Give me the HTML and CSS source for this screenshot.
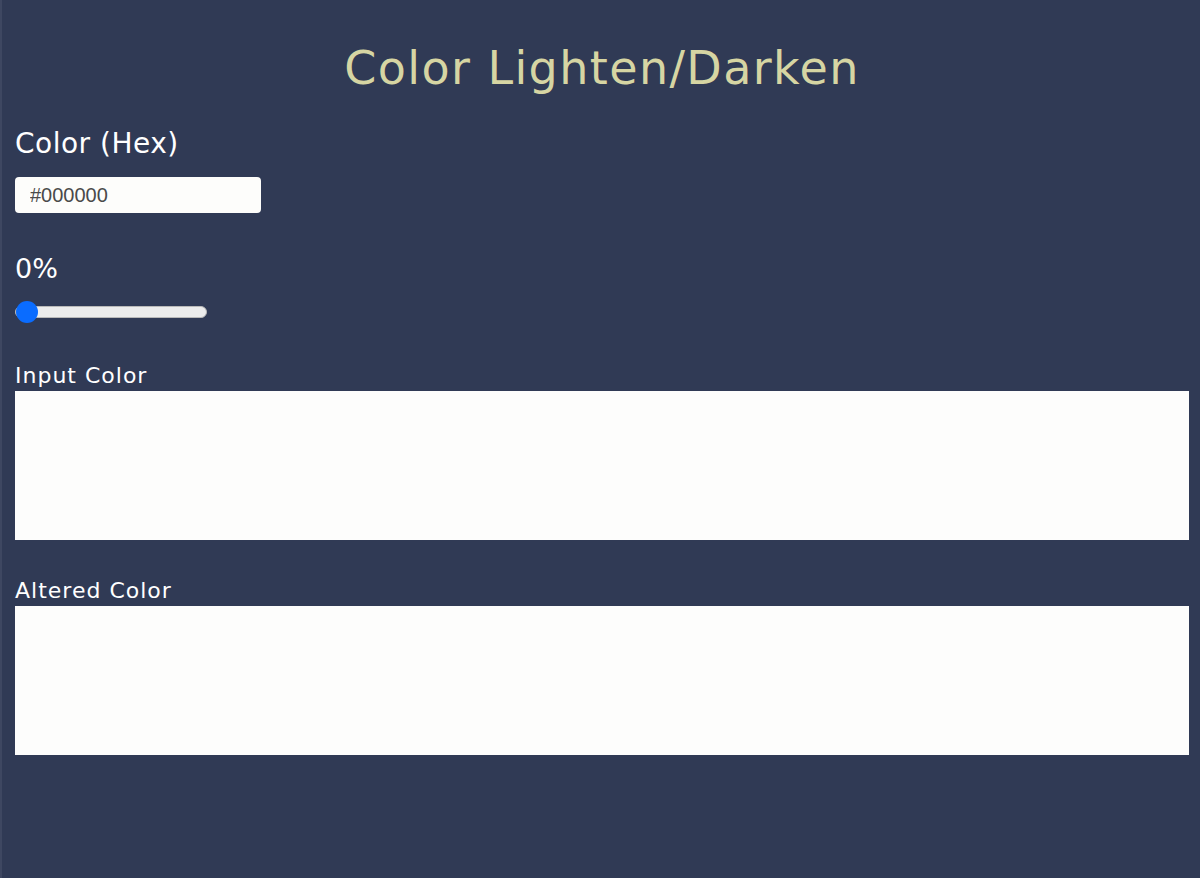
FILE: index.html
```html
<!DOCTYPE html>
<html lang="en">
<head>
    <meta charset="UTF-8">
    <meta name="viewport" content="width=device-width, initial-scale=1.0">
    <title>Color Lighten/Darken</title>
    <link rel="stylesheet" href="styles.css">
</head>
<body>
    <h1>Color Lighten/Darken</h1>
    <label class="field-label" for="hex">Color (Hex)</label>
    <input type="text" id="hex" class="hex-input" value="#000000">
    <label class="field-label percent" for="amount" id="percentLabel">0%</label>
    <input type="range" id="amount" class="slider" min="0" max="100" value="0">
    <div class="swatch-label">Input Color</div>
    <div class="swatch" id="inputSwatch"></div>
    <div class="swatch-label">Altered Color</div>
    <div class="swatch" id="alteredSwatch"></div>
    <script>
        function update() {
            let hex = document.getElementById("hex").value;
            let amount = document.getElementById("amount").value;
            document.getElementById("percentLabel").textContent = amount + "%";
            if (!/^#?[0-9a-f]{6}$/i.test(hex) || hex === "#000000") return;
            hex = hex.replace("#", "");
            let num = parseInt(hex, 16);
            let shift = Math.round(2.55 * amount);
            let r = Math.min(255, (num >> 16) + shift);
            let g = Math.min(255, ((num >> 8) & 255) + shift);
            let b = Math.min(255, (num & 255) + shift);
            document.getElementById("inputSwatch").style.background = "#" + hex;
            document.getElementById("alteredSwatch").style.background = "rgb(" + r + "," + g + "," + b + ")";
        }
        document.getElementById("hex").addEventListener("input", update);
        document.getElementById("amount").addEventListener("input", update);
    </script>
</body>
</html>
```

FILE: styles.css
```css
body {
    font-family: "DejaVu Sans", sans-serif;
    background-color: #303a55;
    color: #ffffff;
    margin: 0;
    padding: 0 11px 80px 13px;
    border-left: 2px solid #3e4761;
    min-height: 100vh;
    box-sizing: border-box;
}
h1 {
    text-align: center;
    font-weight: normal;
    font-size: 46px;
    line-height: 54px;
    letter-spacing: 1.4px;
    color: #d6d5a3;
    margin: 0;
    padding: 41px 0 32px;
}
.field-label {
    display: block;
    font-size: 28px;
    line-height: 34px;
    letter-spacing: 0.5px;
}
.percent {
    font-size: 27px;
    letter-spacing: 0;
    margin-top: 39px;
}
.hex-input {
    display: block;
    width: 246px;
    height: 36px;
    box-sizing: border-box;
    margin-top: 16px;
    border: none;
    border-radius: 4px;
    padding: 0 15px;
    font-family: "Liberation Sans", Arial, sans-serif;
    font-size: 20px;
    color: #4a4a4a;
    background: #fdfdfb;
}
.slider {
    -webkit-appearance: none;
    appearance: none;
    display: block;
    width: 192px;
    height: 22px;
    margin: 15px 0 0;
    background: transparent;
}
.slider::-webkit-slider-runnable-track {
    height: 12px;
    border-radius: 6px;
    background: #ececec;
    border: 1px solid #b9b9b9;
    box-sizing: border-box;
}
.slider::-webkit-slider-thumb {
    -webkit-appearance: none;
    width: 22px;
    height: 22px;
    border-radius: 50%;
    background: #0a6cff;
    margin-top: -6px;
}
.swatch-label {
    font-size: 22px;
    line-height: 26px;
    letter-spacing: 1px;
    margin-top: 40px;
}
.swatch {
    height: 149px;
    background: #fdfdfc;
    margin-top: 2px;
}
.swatch + .swatch-label {
    margin-top: 38px;
}
```
